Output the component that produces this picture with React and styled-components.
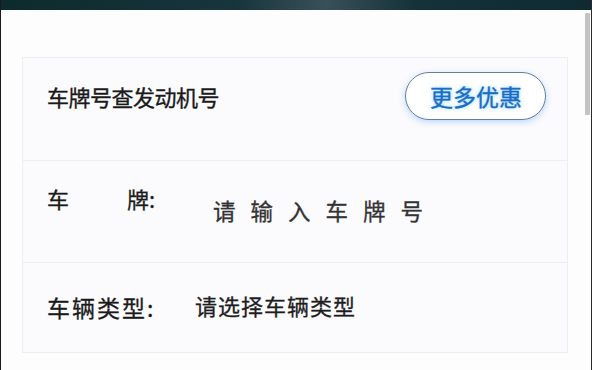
import React from 'react';
import styled, { createGlobalStyle } from 'styled-components';

const GlobalStyle = createGlobalStyle`
  html, body {
    margin: 0;
    padding: 0;
    background: #ffffff;
  }
  #root {
    height: 370px;
    overflow: hidden;
  }
`;

// --- Layout ---
const Screen = styled.div`
  position: relative;
  height: 370px;
  display: flex;
  flex-direction: column;
  background: #fdfdfe;
  border-left: 1px solid #1a1a1a;
  border-right: 1px solid #2a2a2a;
  box-sizing: border-box;
  font-family: "Noto Sans CJK SC", "Noto Sans", sans-serif;
  color: #1a1a1a;
`;

const TopBar = styled.div`
  height: 10px;
  flex-shrink: 0;
  background: linear-gradient(90deg, #0d2a2c 0%, #17353c 40%, #3a4f5a 55%, #15323a 70%, #0f2a30 100%);
`;

const Body = styled.div`
  flex: 1;
  padding: 47px 23px 0 21px;
`;

const Scrollbar = styled.div`
  position: absolute;
  top: 13px;
  right: 1px;
  width: 5px;
  height: 102px;
  background: #c3c3c6;
  border-radius: 1px;
`;

// --- Card ---
const Card = styled.div`
  border: 1px solid #efedf1;
  background: #fbfafd;
`;

const Row = styled.div`
  height: ${p => p.h}px;
  display: flex;
  align-items: ${p => p.top ? 'flex-start' : 'center'};
  padding: ${p => p.top ? '14px 21px 0 24px' : '0 21px 0 24px'};
  box-sizing: border-box;
  border-top: ${p => p.first ? 'none' : '1px solid #efedf1'};
`;

const Title = styled.div`
  flex: 1;
  margin-top: 0;
  font-size: 22px;
  letter-spacing: -0.5px;
  line-height: 48px;
  color: #1a1a1a;
  -webkit-text-stroke: 0.35px #1a1a1a;
`;

const MoreButton = styled.button`
  width: 141px;
  height: 48px;
  padding: 0 0 0 1px;
  border-radius: 24px;
  border: 1.5px solid #62809d;
  background: #fff;
  color: #1a6cc4;
  font-family: inherit;
  font-size: 23px;
  -webkit-text-stroke: 0.35px #1a6cc4;
  text-shadow: 0 0 4px rgba(0, 170, 255, 0.5);
  box-shadow: 0 2px 6px rgba(70, 150, 255, 0.35);
`;

const Field = styled.div`
  display: flex;
  width: ${p => p.w}px;
  flex-shrink: 0;
`;

const Label = styled.div`
  width: ${p => p.w}px;
  font-size: ${p => p.size}px;
  letter-spacing: ${p => p.spacing || 0}px;
  color: #1a1a1a;
  -webkit-text-stroke: 0.3px #1a1a1a;
  display: flex;
  justify-content: space-between;
  white-space: nowrap;
  margin-top: ${p => p.dy || 0}px;
`;

const Placeholder = styled.div`
  font-size: ${p => p.size}px;
  letter-spacing: ${p => p.spacing || 0}px;
  color: ${p => p.color};
  -webkit-text-stroke: 0.3px ${p => p.color};
  margin-top: ${p => p.dy || 0}px;
  white-space: nowrap;
`;

export default function App() {
  return (
    <>
      <GlobalStyle />
      <Screen>
        <TopBar />
        <Body>
          <Card>
            <Row h={102} first top>
              <Title>车牌号查发动机号</Title>
              <MoreButton>更多优惠</MoreButton>
            </Row>
            <Row h={102}>
              <Field w={166}>
                <Label w={108} size={22} dy={-27}>
                  <span>车</span>
                  <span>牌:</span>
                </Label>
              </Field>
              <Placeholder size={22.5} spacing={15} color="#333" dy={-4}>
                请输入车牌号
              </Placeholder>
            </Row>
            <Row h={90}>
              <Field w={148}>
                <Label size={23} spacing={2} dy={-2}>
                  <span>车辆类型:</span>
                </Label>
              </Field>
              <Placeholder size={22} spacing={1} color="#1e1e1e" dy={-5}>
                请选择车辆类型
              </Placeholder>
            </Row>
          </Card>
        </Body>
        <Scrollbar />
      </Screen>
    </>
  );
}
